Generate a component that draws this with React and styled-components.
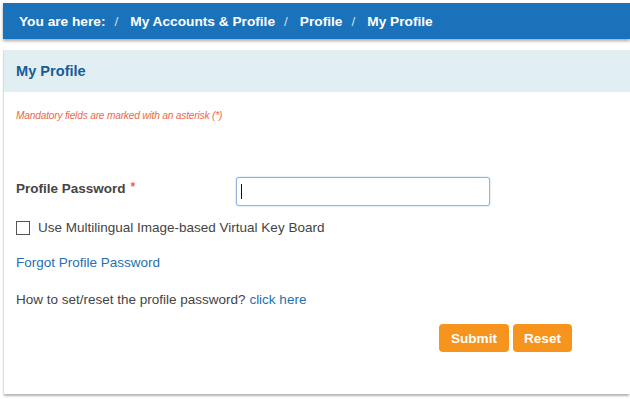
import React from 'react'
import styled, { createGlobalStyle } from 'styled-components'

const GlobalStyle = createGlobalStyle`
  html, body {
    margin: 0;
    padding: 0;
    background: #ffffff;
    font-family: "Liberation Sans", Arial, sans-serif;
  }
`

const Page = styled.div`
  width: 630px;
  height: 399px;
  overflow: hidden;
  padding: 3px 0 0 3px;
  box-sizing: border-box;
`

const Breadcrumb = styled.nav`
  display: flex;
  align-items: center;
  height: 36px;
  padding-left: 16px;
  background: #1a73ba;
  box-shadow: 0 2px 3px rgba(0, 0, 0, 0.35);
  color: #ffffff;
  font-size: 13.7px;
  font-weight: bold;
`

const Crumb = styled.span`
  color: #ffffff;
`

const Slash = styled.span`
  margin: 0 12px 0 9px;
  font-weight: normal;
  color: #c9def0;
`

const Panel = styled.section`
  margin-top: 11px;
  height: 344px;
  border-left: 1px solid #dadada;
  box-shadow: 0 3px 2px -1px rgba(0, 0, 0, 0.3);
  background: #ffffff;
  display: flex;
  flex-direction: column;
`

const PanelHeader = styled.h2`
  margin: 0;
  height: 42px;
  display: flex;
  align-items: center;
  padding-left: 12px;
  background: #e1eff2;
  color: #175c9c;
  font-size: 14.6px;
  font-weight: bold;
`

const PanelBody = styled.div`
  padding: 18px 0 0 12px;
  display: flex;
  flex-direction: column;
`

const Note = styled.p`
  margin: 0;
  font-size: 10.2px;
  letter-spacing: -0.2px;
  font-style: italic;
  color: #ea6a4c;
`

const FieldRow = styled.div`
  display: flex;
  align-items: center;
  margin-top: 56px;
`

const Label = styled.label`
  width: 220px;
  font-size: 13.5px;
  font-weight: bold;
  color: #444444;
  margin-top: -6px;
`

const Star = styled.span`
  position: relative;
  top: -2px;
  margin-left: 5px;
  color: #e8684a;
  font-size: 12px;
`

const InputWrap = styled.div`
  position: relative;
`

const Input = styled.input`
  display: block;
  width: 254px;
  height: 29px;
  box-sizing: border-box;
  border: 1px solid #8db6d9;
  border-radius: 3px;
  box-shadow: 0 0 2px rgba(90, 150, 210, 0.5);
  padding: 0 6px;
  font-size: 14px;
  outline: none;
`

const Caret = styled.span`
  position: absolute;
  left: 5px;
  top: 7px;
  width: 1px;
  height: 15px;
  background: #111111;
`

const CheckRow = styled.label`
  display: flex;
  align-items: center;
  margin-top: 14px;
  font-size: 13.5px;
  color: #444444;
`

const Box = styled.span`
  width: 12px;
  height: 12px;
  border: 1px solid #555555;
  margin-right: 8px;
  background: #fff;
`

const Link = styled.a`
  color: #2470b3;
  text-decoration: none;
  font-size: 13.5px;
`

const LinkRow = styled.div`
  margin-top: ${(p) => p.$gap}px;
  font-size: 13.5px;
  color: #444444;
`

const Actions = styled.div`
  display: flex;
  justify-content: flex-end;
  gap: 4px;
  margin-top: 17px;
  padding-right: 58px;
`

const Button = styled.button`
  height: 28px;
  padding: 0 ${(p) => p.$pad}px;
  border: none;
  border-radius: 4px;
  background: #f7941d;
  color: #ffffff;
  font-family: "Liberation Sans", Arial, sans-serif;
  font-size: 13.6px;
  font-weight: bold;
  cursor: pointer;
`

export default function App() {
  return (
    <>
      <GlobalStyle />
      <Page>
        <Breadcrumb>
          <Crumb>You are here:</Crumb>
          <Slash>/</Slash>
          <Crumb>My Accounts &amp; Profile</Crumb>
          <Slash>/</Slash>
          <Crumb>Profile</Crumb>
          <Slash>/</Slash>
          <Crumb>My Profile</Crumb>
        </Breadcrumb>
        <Panel>
          <PanelHeader>My Profile</PanelHeader>
          <PanelBody>
            <Note>Mandatory fields are marked with an asterisk (*)</Note>
            <FieldRow>
              <Label>
                Profile Password<Star>*</Star>
              </Label>
              <InputWrap>
                <Input type="password" />
                <Caret />
              </InputWrap>
            </FieldRow>
            <CheckRow>
              <Box />
              Use Multilingual Image-based Virtual Key Board
            </CheckRow>
            <LinkRow $gap={20}>
              <Link href="#">Forgot Profile Password</Link>
            </LinkRow>
            <LinkRow $gap={22}>
              How to set/reset the profile password? <Link href="#">click here</Link>
            </LinkRow>
            <Actions>
              <Button $pad={12}>Submit</Button>
              <Button $pad={11}>Reset</Button>
            </Actions>
          </PanelBody>
        </Panel>
      </Page>
    </>
  )
}
